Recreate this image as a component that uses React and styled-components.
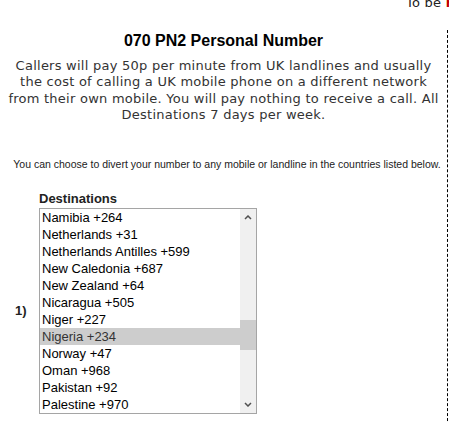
import React from "react";
import styled, { createGlobalStyle } from "styled-components";

const GlobalStyle = createGlobalStyle`
  html, body {
    margin: 0;
    padding: 0;
    background: #fff;
  }
  body {
    font-family: "Liberation Sans", Arial, sans-serif;
    color: #000;
    overflow: hidden;
  }
`;

const Page = styled.div`
  width: 449px;
  height: 423px;
  overflow: hidden;
`;

// strip of the header that is scrolled mostly out of view
const TopNote = styled.div`
  height: 8px;
  overflow: hidden;
  white-space: nowrap;
  padding-left: 406px;
  font-family: "DejaVu Sans", Verdana, sans-serif;
  font-size: 13px;
  line-height: 16px;
  letter-spacing: 0.25px;
  color: #222;

  span {
    display: block;
    margin-top: -5px;
  }
`;

const Red = styled.b`
  color: #c00000;
`;

const Panel = styled.div`
  width: 447px;
  margin-top: 22px;
  padding-top: 1px;
  border-right: 1px dashed #000;
  min-height: 400px;
`;

const Title = styled.h2`
  margin: 0;
  font-size: 16px;
  font-weight: bold;
  line-height: 20px;
  text-align: center;
`;

const Blurb = styled.p`
  margin: 7px 0 0;
  padding: 0 5px;
  font-family: "DejaVu Sans", Verdana, sans-serif;
  font-size: 13px;
  line-height: 16.4px;
  letter-spacing: 0.25px;
  color: #333;
  text-align: center;
`;

const Note = styled.p`
  margin: 34px 0 0;
  padding-left: 7px;
  font-size: 10.5px;
  line-height: 12px;
  color: #222;
  text-align: center;
  white-space: nowrap;
`;

const Picker = styled.div`
  display: grid;
  grid-template-columns: 24px auto;
  justify-content: start;
  align-items: center;
  margin-top: 20px;
  padding-left: 15px;
`;

const Heading = styled.div`
  grid-column: 2;
  font-size: 13px;
  font-weight: bold;
  line-height: 17px;
  padding-bottom: 1px;
  color: #222;
`;

const Num = styled.div`
  font-size: 13px;
  font-weight: bold;
  color: #222;
`;

const ListBox = styled.div`
  display: flex;
  width: 216px;
  height: 204px;
  border: 1px solid #a5a5a5;
  background: #fff;
`;

const Options = styled.div`
  flex: 1;
  overflow: hidden;
`;

const Option = styled.div`
  height: 17px;
  padding-left: 2px;
  font-size: 13px;
  line-height: 17px;
  white-space: nowrap;
  color: ${(p) => (p.$selected ? "#333" : "#000")};
  background: ${(p) => (p.$selected ? "#cdcdcd" : "transparent")};
`;

const Track = styled.div`
  width: 16px;
  display: flex;
  flex-direction: column;
  justify-content: space-between;
  background: #f0f0f0;
  position: relative;
`;

const Arrow = styled.div`
  height: 17px;
  display: flex;
  align-items: center;
  justify-content: center;
`;

const Thumb = styled.div`
  position: absolute;
  left: 0;
  right: 0;
  top: 111px;
  height: 30px;
  background: #cdcdcd;
`;

const Chevron = ({ down }) => (
  <svg width="8" height="5" viewBox="0 0 8 5">
    <path
      d={down ? "M1 1 L4 4 L7 1" : "M1 4 L4 1 L7 4"}
      fill="none"
      stroke="#505050"
      strokeWidth="1.5"
    />
  </svg>
);

const destinations = [
  "Namibia +264",
  "Netherlands +31",
  "Netherlands Antilles +599",
  "New Caledonia +687",
  "New Zealand +64",
  "Nicaragua +505",
  "Niger +227",
  "Nigeria +234",
  "Norway +47",
  "Oman +968",
  "Pakistan +92",
  "Palestine +970",
];

const App = () => {
  return (
    <Page>
      <GlobalStyle />
      <TopNote>
        <span>
          To be <Red>r</Red>
        </span>
      </TopNote>
      <Panel>
        <Title>070 PN2 Personal Number</Title>
        <Blurb>
          Callers will pay 50p per minute from UK landlines and usually the cost
          of calling a UK mobile phone on a different network from their own
          mobile. You will pay nothing to receive a call. All Destinations 7
          days per week.
        </Blurb>
        <Note>
          You can choose to divert your number to any mobile or landline in the
          countries listed below.
        </Note>
        <Picker>
          <Heading>Destinations</Heading>
          <Num>1)</Num>
          <ListBox>
            <Options>
              {destinations.map((d) => (
                <Option key={d} $selected={d === "Nigeria +234"}>
                  {d}
                </Option>
              ))}
            </Options>
            <Track>
              <Arrow>
                <Chevron />
              </Arrow>
              <Thumb />
              <Arrow>
                <Chevron down />
              </Arrow>
            </Track>
          </ListBox>
        </Picker>
      </Panel>
    </Page>
  );
};

export default App;
